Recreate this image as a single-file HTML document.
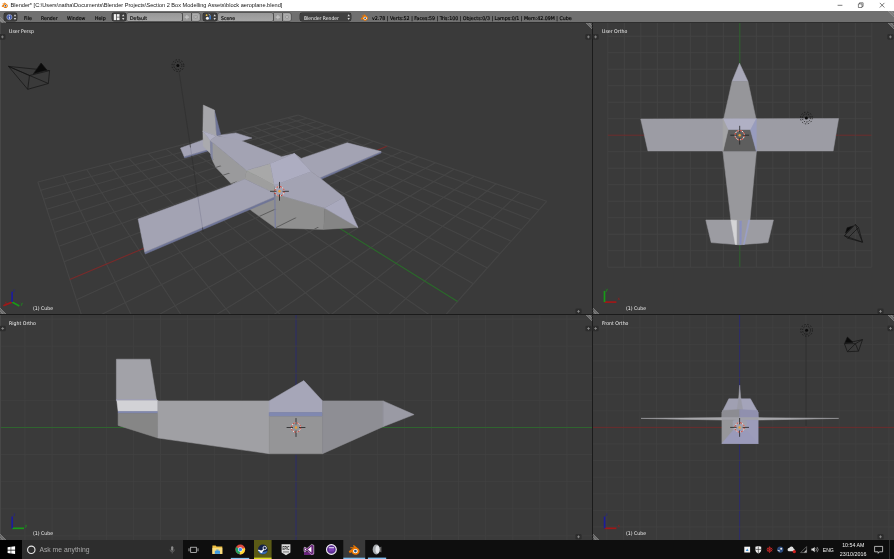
<!DOCTYPE html>
<html><head><meta charset="utf-8"><title>Blender</title>
<style>
html,body{margin:0;padding:0;}
body{width:894px;height:559px;overflow:hidden;position:relative;background:#3a3a3a;font-family:"DejaVu Sans","Liberation Sans",sans-serif;}
.abs{position:absolute;white-space:nowrap;}
#all{position:absolute;left:0;top:0;width:894px;height:559px;will-change:transform;}
#title{left:0;top:0;width:894px;height:10.8px;background:#fff;}
#title .t{left:10.6px;top:1.6px;font:5.6px/7px "Liberation Sans",sans-serif;color:#151515;}
#hdr{left:0;top:10.8px;width:894px;height:11.6px;background:#707070;border-bottom:0.9px solid #2e2e2e;}
#lstrip{left:0;top:23.3px;width:1px;height:517px;background:#474747;}
.m{font-size:5px;line-height:7px;color:#050505;top:14.6px;-webkit-text-stroke:0.15px #050505;transform:translateY(-0.4px) scaleX(.93);transform-origin:0 50%;}
.vl{font-size:5px;line-height:7px;color:#f2f2f2;transform:scaleX(.93);transform-origin:0 50%;}
.fld{background:linear-gradient(#989898,#a6a6a6);border-radius:1.6px;height:8.6px;top:12.8px;box-shadow:0 0 0 0.4px #3e3e3e;}
.btn{background:#999;}
.dk{background:#3d3d3d;border-radius:2px;height:8.8px;top:12.7px;box-shadow:0 0 0 0.4px #2a2a2a;}
#hsplit{left:0;top:314px;width:894px;height:1px;background:#1b1b1b;}
#vsplit{left:592px;top:23px;width:1px;height:517px;background:#1b1b1b;}
#task{left:0;top:540px;width:894px;height:19px;background:#0e0e0e;}
.s{font:5.6px/7px "Liberation Sans",sans-serif;color:#f0f0f0;}
</style></head><body><div id="all">
<div id="title" class="abs"><span class="abs t">Blender* [C:\Users\natha\Documents\Blender Projects\Section 2 Box Modelling Assets\block aeroplane.blend]</span></div>
<div id="hdr" class="abs"></div>
<div class="abs dk" style="left:4.1px;width:13.3px"></div>
<span class="abs m" style="left:23.5px">File</span>
<span class="abs m" style="left:41px">Render</span>
<span class="abs m" style="left:66.7px">Window</span>
<span class="abs m" style="left:94.8px">Help</span>
<div class="abs dk" style="left:112px;width:13.8px"></div>
<div class="abs fld" style="left:126.5px;width:55.7px"></div>
<span class="abs m" style="left:129.8px">Default</span>
<div class="abs fld btn" style="left:182.9px;width:8px;border-radius:0"></div>
<div class="abs fld btn" style="left:191.6px;width:8px;border-radius:0 1.6px 1.6px 0"></div>
<div class="abs dk" style="left:203.4px;width:14px"></div>
<div class="abs fld" style="left:218.1px;width:55.1px"></div>
<span class="abs m" style="left:220.8px">Scene</span>
<div class="abs fld btn" style="left:273.8px;width:8.1px;border-radius:0"></div>
<div class="abs fld btn" style="left:282.6px;width:8.7px;border-radius:0 1.6px 1.6px 0"></div>
<div class="abs dk" style="left:300.4px;width:50.7px;background:#404040"></div>
<span class="abs m" style="left:303.7px;color:#f0f0f0;-webkit-text-stroke:0;transform:translateY(-0.4px) scaleX(.9)">Blender Render</span>
<span class="abs m" style="left:372.2px;transform:translateY(-0.4px) scaleX(.947)">v2.78 | Verts:52 | Faces:59 | Tris:100 | Objects:0/3 | Lamps:0/1 | Mem:42.09M | Cube</span>
<svg style="position:absolute;left:0;top:23px" width="592" height="291" viewBox="0 23 592 291"><line x1="179.6" y1="614.1" x2="37.9" y2="182.0" stroke="#454545" stroke-width="1.1" /><line x1="179.6" y1="614.1" x2="546.6" y2="201.3" stroke="#454545" stroke-width="1.1" /><line x1="242.8" y1="543.1" x2="63.2" y2="175.5" stroke="#454545" stroke-width="1.1" /><line x1="153.2" y1="533.6" x2="520.2" y2="192.2" stroke="#454545" stroke-width="1.1" /><line x1="292.8" y1="486.9" x2="86.7" y2="169.5" stroke="#454545" stroke-width="1.1" /><line x1="132.9" y1="471.8" x2="496.2" y2="183.8" stroke="#454545" stroke-width="1.1" /><line x1="333.3" y1="441.3" x2="108.6" y2="163.8" stroke="#454545" stroke-width="1.1" /><line x1="116.9" y1="423.0" x2="474.2" y2="176.2" stroke="#454545" stroke-width="1.1" /><line x1="366.7" y1="403.7" x2="129.0" y2="158.6" stroke="#454545" stroke-width="1.1" /><line x1="103.9" y1="383.4" x2="454.0" y2="169.2" stroke="#454545" stroke-width="1.1" /><line x1="394.9" y1="372.0" x2="148.1" y2="153.7" stroke="#454545" stroke-width="1.1" /><line x1="93.2" y1="350.7" x2="435.4" y2="162.8" stroke="#454545" stroke-width="1.1" /><line x1="418.9" y1="345.0" x2="166.0" y2="149.1" stroke="#454545" stroke-width="1.1" /><line x1="84.2" y1="323.1" x2="418.2" y2="156.8" stroke="#454545" stroke-width="1.1" /><line x1="439.5" y1="321.8" x2="182.8" y2="144.8" stroke="#454545" stroke-width="1.1" /><line x1="76.5" y1="299.7" x2="402.2" y2="151.3" stroke="#454545" stroke-width="1.1" /><line x1="457.6" y1="301.5" x2="198.6" y2="140.7" stroke="#2a6a2a" stroke-width="1.1" /><line x1="69.8" y1="279.4" x2="387.4" y2="146.1" stroke="#7a2a2a" stroke-width="1.1" /><line x1="473.4" y1="283.7" x2="213.5" y2="136.9" stroke="#454545" stroke-width="1.1" /><line x1="64.0" y1="261.8" x2="373.6" y2="141.3" stroke="#454545" stroke-width="1.1" /><line x1="487.4" y1="267.9" x2="227.6" y2="133.2" stroke="#454545" stroke-width="1.1" /><line x1="58.9" y1="246.2" x2="360.7" y2="136.8" stroke="#454545" stroke-width="1.1" /><line x1="500.0" y1="253.8" x2="240.9" y2="129.8" stroke="#454545" stroke-width="1.1" /><line x1="54.4" y1="232.5" x2="348.6" y2="132.6" stroke="#454545" stroke-width="1.1" /><line x1="511.2" y1="241.2" x2="253.6" y2="126.6" stroke="#454545" stroke-width="1.1" /><line x1="50.4" y1="220.2" x2="337.2" y2="128.7" stroke="#454545" stroke-width="1.1" /><line x1="521.4" y1="229.7" x2="265.5" y2="123.5" stroke="#454545" stroke-width="1.1" /><line x1="46.8" y1="209.2" x2="326.5" y2="125.0" stroke="#454545" stroke-width="1.1" /><line x1="530.6" y1="219.4" x2="276.9" y2="120.5" stroke="#454545" stroke-width="1.1" /><line x1="43.5" y1="199.3" x2="316.5" y2="121.5" stroke="#454545" stroke-width="1.1" /><line x1="539.0" y1="210.0" x2="287.7" y2="117.8" stroke="#454545" stroke-width="1.1" /><line x1="40.6" y1="190.3" x2="307.0" y2="118.2" stroke="#454545" stroke-width="1.1" /><line x1="546.6" y1="201.3" x2="298.0" y2="115.1" stroke="#454545" stroke-width="1.1" /><line x1="37.9" y1="182.0" x2="298.0" y2="115.1" stroke="#454545" stroke-width="1.1" /><polygon points="218.0,135.5 235.8,132.9 251.9,138.0 238.0,142.0" fill="#a3a3b5" stroke="#a3a3b5" stroke-width="0.5" stroke-linejoin="round" /><polygon points="214.3,110.0 220.7,134.6 216.3,135.9" fill="#6f7597" stroke="#6f7597" stroke-width="0.5" stroke-linejoin="round" /><polygon points="203.3,105.1 214.3,110.0 216.3,135.9 202.9,131.2" fill="#a6a6aa" stroke="#a6a6aa" stroke-width="0.5" stroke-linejoin="round" /><polygon points="184.1,156.5 210.3,148.7 210.5,150.2 184.5,158.0" fill="#6f7597" stroke="#6f7597" stroke-width="0.5" stroke-linejoin="round" /><polygon points="180.5,148.0 202.9,140.0 210.3,148.7 184.1,156.5" fill="#a3a3b5" stroke="#a3a3b5" stroke-width="0.5" stroke-linejoin="round" /><polygon points="202.9,131.2 210.3,140.6 210.8,154.0 203.2,146.0" fill="#aaaaae" stroke="#aaaaae" stroke-width="0.5" stroke-linejoin="round" /><polygon points="202.9,131.2 216.3,135.9 210.3,140.6" fill="#b0b0c2" stroke="#b0b0c2" stroke-width="0.5" stroke-linejoin="round" /><polygon points="210.2,140.4 246.6,170.4 244.8,179.1 232.0,184.5 216.0,167.5 212.7,161.0" fill="#9a9a9c" stroke="#9a9a9c" stroke-width="0.5" stroke-linejoin="round" /><polygon points="210.3,140.6 212.3,142.5 212.5,160.0 210.8,156.0" fill="#8286a2" stroke="#8286a2" stroke-width="0.5" stroke-linejoin="round" /><polygon points="246.6,170.4 274.4,185.3 273.9,193.0 244.8,179.1" fill="#9e9e9e" stroke="#9e9e9e" stroke-width="0.5" stroke-linejoin="round" /><polygon points="246.6,170.4 270.3,163.4 274.4,185.3" fill="#a8a8a8" stroke="#a8a8a8" stroke-width="0.5" stroke-linejoin="round" /><polygon points="210.2,140.4 216.3,135.7 238.0,139.5 281.5,156.7 294.5,153.6 270.3,163.4 246.6,170.4" fill="#a3a3b3" stroke="#a3a3b3" stroke-width="0.5" stroke-linejoin="round" /><polygon points="249.0,208.5 274.0,199.0 275.5,193.9 324.5,208.0 323.8,229.4 275.5,228.0 251.3,210.6" fill="#8f8f8f" stroke="#8f8f8f" stroke-width="0.5" stroke-linejoin="round" /><polygon points="324.5,208.0 358.0,227.4 323.8,229.4" fill="#858585" stroke="#858585" stroke-width="0.5" stroke-linejoin="round" /><clipPath id="fc"><polygon points="248.4,190.0 275.8,208.9 323.8,229.4 275.5,228.0 251.3,210.6 249.0,208.5"/><polygon points="213.0,159.0 238.0,180.5 232.0,184.5 216.0,167.5"/></clipPath><g clip-path="url(#fc)"><line x1="179.6" y1="614.1" x2="546.6" y2="201.3" stroke="#484848" stroke-width="0.7" /><line x1="153.2" y1="533.6" x2="520.2" y2="192.2" stroke="#484848" stroke-width="0.7" /><line x1="132.9" y1="471.8" x2="496.2" y2="183.8" stroke="#484848" stroke-width="0.7" /><line x1="116.9" y1="423.0" x2="474.2" y2="176.2" stroke="#484848" stroke-width="0.7" /><line x1="103.9" y1="383.4" x2="454.0" y2="169.2" stroke="#484848" stroke-width="0.7" /><line x1="93.2" y1="350.7" x2="435.4" y2="162.8" stroke="#484848" stroke-width="0.7" /><line x1="84.2" y1="323.1" x2="418.2" y2="156.8" stroke="#484848" stroke-width="0.7" /><line x1="76.5" y1="299.7" x2="402.2" y2="151.3" stroke="#484848" stroke-width="0.7" /><line x1="69.8" y1="279.4" x2="387.4" y2="146.1" stroke="#484848" stroke-width="0.7" /><line x1="64.0" y1="261.8" x2="373.6" y2="141.3" stroke="#484848" stroke-width="0.7" /><line x1="58.9" y1="246.2" x2="360.7" y2="136.8" stroke="#484848" stroke-width="0.7" /><line x1="54.4" y1="232.5" x2="348.6" y2="132.6" stroke="#484848" stroke-width="0.7" /><line x1="50.4" y1="220.2" x2="337.2" y2="128.7" stroke="#484848" stroke-width="0.7" /><line x1="46.8" y1="209.2" x2="326.5" y2="125.0" stroke="#484848" stroke-width="0.7" /><line x1="43.5" y1="199.3" x2="316.5" y2="121.5" stroke="#484848" stroke-width="0.7" /><line x1="40.6" y1="190.3" x2="307.0" y2="118.2" stroke="#484848" stroke-width="0.7" /><line x1="37.9" y1="182.0" x2="298.0" y2="115.1" stroke="#484848" stroke-width="0.7" /></g><polygon points="319.7,177.7 381.1,151.5 381.1,153.0 320.5,179.6" fill="#6f7597" stroke="#6f7597" stroke-width="0.5" stroke-linejoin="round" /><polygon points="294.5,153.6 301.2,158.5 347.2,142.8 381.1,151.5 319.7,177.7 311.1,171.5" fill="#a3a3b3" stroke="#a3a3b3" stroke-width="0.5" stroke-linejoin="round" /><polygon points="274.4,185.3 311.1,171.5 319.7,177.7 344.0,197.2 324.5,208.0 275.5,193.9" fill="#a3a3b3" stroke="#a3a3b3" stroke-width="0.5" stroke-linejoin="round" /><polygon points="344.0,197.2 358.0,227.4 324.5,208.0" fill="#a9a9bd" stroke="#a9a9bd" stroke-width="0.5" stroke-linejoin="round" /><polygon points="270.3,163.4 294.5,153.6 311.1,171.5 274.4,185.3" fill="#adadc1" stroke="#adadc1" stroke-width="0.5" stroke-linejoin="round" /><polygon points="144.7,252.0 274.0,197.0 274.0,199.3 145.2,254.0" fill="#6f7597" stroke="#6f7597" stroke-width="0.5" stroke-linejoin="round" /><polygon points="138.1,219.0 232.0,184.5 244.8,179.1 273.9,193.0 274.0,197.0 144.7,252.0" fill="#a3a3b3" stroke="#a3a3b3" stroke-width="0.5" stroke-linejoin="round" /><line x1="274.8" y1="194.0" x2="275.3" y2="228.0" stroke="#7a7f9f" stroke-width="1.3" /></svg>\n<svg style="position:absolute;left:593px;top:23px" width="301" height="291" viewBox="593 23 301 291"><line x1="607.8" y1="23.0" x2="607.8" y2="267.2" stroke="#454545" stroke-width="0.8" /><line x1="624.3" y1="23.0" x2="624.3" y2="267.2" stroke="#454545" stroke-width="0.8" /><line x1="640.8" y1="23.0" x2="640.8" y2="267.2" stroke="#454545" stroke-width="0.8" /><line x1="607.8" y1="36.2" x2="871.8" y2="36.2" stroke="#454545" stroke-width="0.8" /><line x1="657.3" y1="23.0" x2="657.3" y2="267.2" stroke="#454545" stroke-width="0.8" /><line x1="607.8" y1="52.7" x2="871.8" y2="52.7" stroke="#454545" stroke-width="0.8" /><line x1="673.8" y1="23.0" x2="673.8" y2="267.2" stroke="#454545" stroke-width="0.8" /><line x1="607.8" y1="69.2" x2="871.8" y2="69.2" stroke="#454545" stroke-width="0.8" /><line x1="690.3" y1="23.0" x2="690.3" y2="267.2" stroke="#454545" stroke-width="0.8" /><line x1="607.8" y1="85.7" x2="871.8" y2="85.7" stroke="#454545" stroke-width="0.8" /><line x1="706.8" y1="23.0" x2="706.8" y2="267.2" stroke="#454545" stroke-width="0.8" /><line x1="607.8" y1="102.2" x2="871.8" y2="102.2" stroke="#454545" stroke-width="0.8" /><line x1="723.3" y1="23.0" x2="723.3" y2="267.2" stroke="#454545" stroke-width="0.8" /><line x1="607.8" y1="118.7" x2="871.8" y2="118.7" stroke="#454545" stroke-width="0.8" /><line x1="739.8" y1="23.0" x2="739.8" y2="267.2" stroke="#2c6e2c" stroke-width="0.8" /><line x1="607.8" y1="135.2" x2="871.8" y2="135.2" stroke="#7a2a2a" stroke-width="0.8" /><line x1="756.3" y1="23.0" x2="756.3" y2="267.2" stroke="#454545" stroke-width="0.8" /><line x1="607.8" y1="151.7" x2="871.8" y2="151.7" stroke="#454545" stroke-width="0.8" /><line x1="772.8" y1="23.0" x2="772.8" y2="267.2" stroke="#454545" stroke-width="0.8" /><line x1="607.8" y1="168.2" x2="871.8" y2="168.2" stroke="#454545" stroke-width="0.8" /><line x1="789.3" y1="23.0" x2="789.3" y2="267.2" stroke="#454545" stroke-width="0.8" /><line x1="607.8" y1="184.7" x2="871.8" y2="184.7" stroke="#454545" stroke-width="0.8" /><line x1="805.8" y1="23.0" x2="805.8" y2="267.2" stroke="#454545" stroke-width="0.8" /><line x1="607.8" y1="201.2" x2="871.8" y2="201.2" stroke="#454545" stroke-width="0.8" /><line x1="822.3" y1="23.0" x2="822.3" y2="267.2" stroke="#454545" stroke-width="0.8" /><line x1="607.8" y1="217.7" x2="871.8" y2="217.7" stroke="#454545" stroke-width="0.8" /><line x1="838.8" y1="23.0" x2="838.8" y2="267.2" stroke="#454545" stroke-width="0.8" /><line x1="607.8" y1="234.2" x2="871.8" y2="234.2" stroke="#454545" stroke-width="0.8" /><line x1="855.3" y1="23.0" x2="855.3" y2="267.2" stroke="#454545" stroke-width="0.8" /><line x1="607.8" y1="250.7" x2="871.8" y2="250.7" stroke="#454545" stroke-width="0.8" /><line x1="871.8" y1="23.0" x2="871.8" y2="267.2" stroke="#454545" stroke-width="0.8" /><line x1="607.8" y1="267.2" x2="871.8" y2="267.2" stroke="#454545" stroke-width="0.8" /><polygon points="739.5,63.2 748.0,81.5 732.0,81.5" fill="#a8a8b8" stroke="#a8a8b8" stroke-width="0.5" stroke-linejoin="round" /><polygon points="732.0,81.5 748.0,81.5 756.0,118.7 723.7,118.7" fill="#96969a" stroke="#96969a" stroke-width="0.5" stroke-linejoin="round" /><polygon points="640.7,119.0 838.6,118.5 833.2,150.9 647.9,150.9" fill="#9c9ca4" stroke="#9c9ca4" stroke-width="0.5" stroke-linejoin="round" /><polygon points="722.9,118.8 756.4,118.8 750.5,130.1 728.1,130.1" fill="#b0b0c4" stroke="#b0b0c4" stroke-width="0.5" stroke-linejoin="round" /><polygon points="728.1,130.1 750.5,130.1 756.4,151.6 722.9,151.6" fill="#5e5e5e" stroke="#5e5e5e" stroke-width="0.5" stroke-linejoin="round" /><polygon points="722.9,118.8 728.1,130.1 722.9,151.6" fill="#a4a4a6" stroke="#a4a4a6" stroke-width="0.5" stroke-linejoin="round" /><polygon points="756.4,118.8 750.5,130.1 756.4,151.6" fill="#989cbe" stroke="#989cbe" stroke-width="0.5" stroke-linejoin="round" /><polygon points="722.9,151.6 756.4,151.6 749.9,220.3 730.9,220.3" fill="#98989c" stroke="#98989c" stroke-width="0.5" stroke-linejoin="round" /><polygon points="705.8,220.0 773.4,220.0 768.0,242.6 739.4,244.8 711.2,242.6" fill="#9c9ca2" stroke="#9c9ca2" stroke-width="0.5" stroke-linejoin="round" /><polygon points="730.9,220.0 737.1,220.5 737.1,244.4 735.3,244.4" fill="#d4d4d6" stroke="#d4d4d6" stroke-width="0.5" stroke-linejoin="round" /><polygon points="737.1,220.5 748.6,220.3 743.8,244.4 737.1,244.4" fill="#9a9aa2" stroke="#9a9aa2" stroke-width="0.5" stroke-linejoin="round" /><polygon points="739.8,221.0 741.6,221.0 741.2,244.4 739.8,244.4" fill="#8a90c0" stroke="#8a90c0" stroke-width="0.5" stroke-linejoin="round" /><polygon points="748.5,220.0 749.9,220.0 744.4,244.4 743.4,244.4" fill="#9aa0c8" stroke="#9aa0c8" stroke-width="0.5" stroke-linejoin="round" /></svg>\n<svg style="position:absolute;left:0;top:315px" width="592" height="225" viewBox="0 315 592 225"><line x1="-2.1" y1="315.0" x2="-2.1" y2="540.0" stroke="#414141" stroke-width="0.8" /><line x1="25.0" y1="315.0" x2="25.0" y2="540.0" stroke="#414141" stroke-width="0.8" /><line x1="52.1" y1="315.0" x2="52.1" y2="540.0" stroke="#414141" stroke-width="0.8" /><line x1="79.2" y1="315.0" x2="79.2" y2="540.0" stroke="#414141" stroke-width="0.8" /><line x1="106.3" y1="315.0" x2="106.3" y2="540.0" stroke="#414141" stroke-width="0.8" /><line x1="133.4" y1="315.0" x2="133.4" y2="540.0" stroke="#414141" stroke-width="0.8" /><line x1="160.5" y1="315.0" x2="160.5" y2="540.0" stroke="#414141" stroke-width="0.8" /><line x1="187.6" y1="315.0" x2="187.6" y2="540.0" stroke="#414141" stroke-width="0.8" /><line x1="214.7" y1="315.0" x2="214.7" y2="540.0" stroke="#414141" stroke-width="0.8" /><line x1="241.8" y1="315.0" x2="241.8" y2="540.0" stroke="#414141" stroke-width="0.8" /><line x1="268.9" y1="315.0" x2="268.9" y2="540.0" stroke="#414141" stroke-width="0.8" /><line x1="296.0" y1="315.0" x2="296.0" y2="540.0" stroke="#2a2a78" stroke-width="0.8" /><line x1="323.1" y1="315.0" x2="323.1" y2="540.0" stroke="#414141" stroke-width="0.8" /><line x1="350.2" y1="315.0" x2="350.2" y2="540.0" stroke="#414141" stroke-width="0.8" /><line x1="377.3" y1="315.0" x2="377.3" y2="540.0" stroke="#414141" stroke-width="0.8" /><line x1="404.4" y1="315.0" x2="404.4" y2="540.0" stroke="#414141" stroke-width="0.8" /><line x1="431.5" y1="315.0" x2="431.5" y2="540.0" stroke="#414141" stroke-width="0.8" /><line x1="458.6" y1="315.0" x2="458.6" y2="540.0" stroke="#414141" stroke-width="0.8" /><line x1="485.7" y1="315.0" x2="485.7" y2="540.0" stroke="#414141" stroke-width="0.8" /><line x1="512.8" y1="315.0" x2="512.8" y2="540.0" stroke="#414141" stroke-width="0.8" /><line x1="539.9" y1="315.0" x2="539.9" y2="540.0" stroke="#414141" stroke-width="0.8" /><line x1="567.0" y1="315.0" x2="567.0" y2="540.0" stroke="#414141" stroke-width="0.8" /><line x1="594.1" y1="315.0" x2="594.1" y2="540.0" stroke="#414141" stroke-width="0.8" /><line x1="0.0" y1="319.1" x2="592.0" y2="319.1" stroke="#414141" stroke-width="0.8" /><line x1="0.0" y1="346.2" x2="592.0" y2="346.2" stroke="#414141" stroke-width="0.8" /><line x1="0.0" y1="373.3" x2="592.0" y2="373.3" stroke="#414141" stroke-width="0.8" /><line x1="0.0" y1="400.4" x2="592.0" y2="400.4" stroke="#414141" stroke-width="0.8" /><line x1="0.0" y1="427.5" x2="592.0" y2="427.5" stroke="#2c6e2c" stroke-width="0.8" /><line x1="0.0" y1="454.6" x2="592.0" y2="454.6" stroke="#414141" stroke-width="0.8" /><line x1="0.0" y1="481.7" x2="592.0" y2="481.7" stroke="#414141" stroke-width="0.8" /><line x1="0.0" y1="508.8" x2="592.0" y2="508.8" stroke="#414141" stroke-width="0.8" /><line x1="0.0" y1="535.9" x2="592.0" y2="535.9" stroke="#414141" stroke-width="0.8" /><polygon points="116.4,359.2 150.0,359.2 156.5,400.0 116.4,400.0" fill="#a2a2a8" stroke="#a2a2a8" stroke-width="0.5" stroke-linejoin="round" /><polygon points="116.4,399.6 156.5,399.6 156.6,400.6 116.4,400.6" fill="#9c9cb6" stroke="#9c9cb6" stroke-width="0.5" stroke-linejoin="round" /><polygon points="116.8,400.4 157.9,400.4 157.9,411.5 118.1,411.5" fill="#d2d2d6" stroke="#d2d2d6" stroke-width="0.5" stroke-linejoin="round" /><polygon points="118.1,411.5 157.9,411.5 157.9,413.5 118.1,413.5" fill="#8088b0" stroke="#8088b0" stroke-width="0.5" stroke-linejoin="round" /><polygon points="118.1,413.3 157.9,413.3 157.9,438.0 118.1,425.4" fill="#868686" stroke="#868686" stroke-width="0.5" stroke-linejoin="round" /><polygon points="157.9,400.9 269.1,400.9 269.1,453.7 157.9,438.0" fill="#a0a0a4" stroke="#a0a0a4" stroke-width="0.5" stroke-linejoin="round" /><polygon points="269.1,400.9 303.8,380.6 322.6,400.9 322.6,412.5 269.1,412.5" fill="#a6a6b8" stroke="#a6a6b8" stroke-width="0.5" stroke-linejoin="round" /><polygon points="269.1,412.5 322.6,412.5 322.6,416.5 269.1,416.5" fill="#8088b0" stroke="#8088b0" stroke-width="0.5" stroke-linejoin="round" /><polygon points="269.1,416.5 322.6,416.5 322.6,453.7 269.1,453.7" fill="#959597" stroke="#959597" stroke-width="0.5" stroke-linejoin="round" /><polygon points="322.6,400.9 383.1,400.9 383.1,426.7 322.6,453.7" fill="#8e8e94" stroke="#8e8e94" stroke-width="0.5" stroke-linejoin="round" /><polygon points="383.1,400.9 414.1,414.6 383.1,426.7" fill="#9a9aa4" stroke="#9a9aa4" stroke-width="0.5" stroke-linejoin="round" /></svg>\n<svg style="position:absolute;left:593px;top:315px" width="301" height="225" viewBox="593 315 301 225"><line x1="590.2" y1="315.0" x2="590.2" y2="540.0" stroke="#414141" stroke-width="0.8" /><line x1="606.8" y1="315.0" x2="606.8" y2="540.0" stroke="#414141" stroke-width="0.8" /><line x1="623.4" y1="315.0" x2="623.4" y2="540.0" stroke="#414141" stroke-width="0.8" /><line x1="640.0" y1="315.0" x2="640.0" y2="540.0" stroke="#414141" stroke-width="0.8" /><line x1="656.6" y1="315.0" x2="656.6" y2="540.0" stroke="#414141" stroke-width="0.8" /><line x1="673.2" y1="315.0" x2="673.2" y2="540.0" stroke="#414141" stroke-width="0.8" /><line x1="689.8" y1="315.0" x2="689.8" y2="540.0" stroke="#414141" stroke-width="0.8" /><line x1="706.4" y1="315.0" x2="706.4" y2="540.0" stroke="#414141" stroke-width="0.8" /><line x1="723.0" y1="315.0" x2="723.0" y2="540.0" stroke="#414141" stroke-width="0.8" /><line x1="739.6" y1="315.0" x2="739.6" y2="540.0" stroke="#2a2a78" stroke-width="0.8" /><line x1="756.2" y1="315.0" x2="756.2" y2="540.0" stroke="#414141" stroke-width="0.8" /><line x1="772.8" y1="315.0" x2="772.8" y2="540.0" stroke="#414141" stroke-width="0.8" /><line x1="789.4" y1="315.0" x2="789.4" y2="540.0" stroke="#414141" stroke-width="0.8" /><line x1="806.0" y1="315.0" x2="806.0" y2="540.0" stroke="#414141" stroke-width="0.8" /><line x1="822.6" y1="315.0" x2="822.6" y2="540.0" stroke="#414141" stroke-width="0.8" /><line x1="839.2" y1="315.0" x2="839.2" y2="540.0" stroke="#414141" stroke-width="0.8" /><line x1="855.8" y1="315.0" x2="855.8" y2="540.0" stroke="#414141" stroke-width="0.8" /><line x1="872.4" y1="315.0" x2="872.4" y2="540.0" stroke="#414141" stroke-width="0.8" /><line x1="889.0" y1="315.0" x2="889.0" y2="540.0" stroke="#414141" stroke-width="0.8" /><line x1="593.0" y1="327.8" x2="894.0" y2="327.8" stroke="#414141" stroke-width="0.8" /><line x1="593.0" y1="344.4" x2="894.0" y2="344.4" stroke="#414141" stroke-width="0.8" /><line x1="593.0" y1="361.0" x2="894.0" y2="361.0" stroke="#414141" stroke-width="0.8" /><line x1="593.0" y1="377.6" x2="894.0" y2="377.6" stroke="#414141" stroke-width="0.8" /><line x1="593.0" y1="394.2" x2="894.0" y2="394.2" stroke="#414141" stroke-width="0.8" /><line x1="593.0" y1="410.8" x2="894.0" y2="410.8" stroke="#414141" stroke-width="0.8" /><line x1="593.0" y1="427.4" x2="894.0" y2="427.4" stroke="#7a2a2a" stroke-width="0.8" /><line x1="593.0" y1="444.0" x2="894.0" y2="444.0" stroke="#414141" stroke-width="0.8" /><line x1="593.0" y1="460.6" x2="894.0" y2="460.6" stroke="#414141" stroke-width="0.8" /><line x1="593.0" y1="477.2" x2="894.0" y2="477.2" stroke="#414141" stroke-width="0.8" /><line x1="593.0" y1="493.8" x2="894.0" y2="493.8" stroke="#414141" stroke-width="0.8" /><line x1="593.0" y1="510.4" x2="894.0" y2="510.4" stroke="#414141" stroke-width="0.8" /><line x1="593.0" y1="527.0" x2="894.0" y2="527.0" stroke="#414141" stroke-width="0.8" /><line x1="806.0" y1="330.0" x2="806.0" y2="426.0" stroke="#2a2a2a" stroke-width="0.7" /><polygon points="739.7,385.2 740.6,397.0 742.8,410.0 737.0,410.0 738.8,397.0" fill="#a0a0a8" stroke="#a0a0a8" stroke-width="0.5" stroke-linejoin="round" /><polygon points="728.8,398.8 739.7,398.8 739.7,412.5 721.9,412.5" fill="#a0a0b2" stroke="#a0a0b2" stroke-width="0.5" stroke-linejoin="round" /><polygon points="739.7,398.8 750.4,398.8 758.2,412.5 739.7,412.5" fill="#a4a4ba" stroke="#a4a4ba" stroke-width="0.5" stroke-linejoin="round" /><polygon points="738.6,398.8 740.8,398.8 742.8,410.0 737.0,410.0" fill="#9a9aa6" stroke="#9a9aa6" stroke-width="0.5" stroke-linejoin="round" /><polygon points="721.9,412.5 739.7,412.5 739.7,443.5 721.9,443.5" fill="#96969a" stroke="#96969a" stroke-width="0.5" stroke-linejoin="round" /><polygon points="739.7,412.5 758.2,412.5 758.2,443.5 739.7,443.5" fill="#9c9cba" stroke="#9c9cba" stroke-width="0.5" stroke-linejoin="round" /><polygon points="722.5,410.5 739.7,409.5 739.7,417.5 721.9,417.5" fill="#8c8c92" stroke="#8c8c92" stroke-width="0.5" stroke-linejoin="round" /><polygon points="739.7,409.5 757.4,410.5 758.2,417.5 739.7,417.5" fill="#9090ae" stroke="#9090ae" stroke-width="0.5" stroke-linejoin="round" /><polygon points="733.0,430.5 746.5,430.5 746.5,421.0 739.7,418.0 733.0,421.0" fill="#a0a0ae" stroke="#a0a0ae" stroke-width="0.5" stroke-linejoin="round" /><polygon points="721.9,443.5 733.0,430.5 746.5,430.5 758.2,443.5" fill="#9a9aba" stroke="#9a9aba" stroke-width="0.5" stroke-linejoin="round" /><polygon points="641.0,418.4 722.0,417.6 722.0,420.0 690.0,419.4" fill="#a6a6aa" stroke="#a6a6aa" stroke-width="0.5" stroke-linejoin="round" /><polygon points="838.7,418.4 758.0,417.6 758.0,420.0 790.0,419.4" fill="#a6a6aa" stroke="#a6a6aa" stroke-width="0.5" stroke-linejoin="round" /><polygon points="722.0,417.6 758.0,417.6 758.0,419.6 722.0,419.6" fill="#a2a2a8" stroke="#a2a2a8" stroke-width="0.5" stroke-linejoin="round" /></svg>
<div id="lstrip" class="abs"></div><div id="hsplit" class="abs"></div><div id="vsplit" class="abs"></div>
<span class="abs vl" style="left:9.2px;top:27.8px">User Persp</span>
<span class="abs vl" style="left:602px;top:27.8px">User Ortho</span>
<span class="abs vl" style="left:9.2px;top:319.5px">Right Ortho</span>
<span class="abs vl" style="left:602px;top:319.5px">Front Ortho</span>
<span class="abs vl" style="left:32.6px;top:305px">(1) Cube</span>
<span class="abs vl" style="left:625.6px;top:305px">(1) Cube</span>
<span class="abs vl" style="left:32.6px;top:530.4px">(1) Cube</span>
<span class="abs vl" style="left:625.6px;top:530.4px">(1) Cube</span>
<div id="task" class="abs"></div>
<svg class="abs" style="left:0;top:0" width="894" height="559" viewBox="0 0 894 559"><g transform="translate(4.60,5.40) scale(0.500)"><path d="M-6 1.2 L-1.2 -2.4 L-4.2 -2.4 L-4.2 -3.6 L0.6 -3.6 L-1.2 -5 L-0.2 -5.9 L5.2 -1.9 A4.6 4.2 0 1 1 -2.6 2.2 L-4.8 3.4 Z" fill="#ea7600"/><ellipse cx="1.6" cy="0.9" rx="2.7" ry="2.5" fill="#fff"/><circle cx="1.6" cy="0.9" r="1.55" fill="#265787"/></g><path d="M837.6 5.3h4.8" stroke="#222" stroke-width="0.6"/><path d="M858.4 3.9h3.6v3.6h-3.6zM859.5 3.9v-1.1h3.6v3.6h-1.1" stroke="#222" stroke-width="0.55" fill="none"/><path d="M879.8 2.9l4.6 4.6M884.4 2.9l-4.6 4.6" stroke="#222" stroke-width="0.6"/><circle cx="9.4" cy="17.1" r="2.6" fill="#3e56a8" stroke="#c8d0ee" stroke-width="0.5"/><path d="M9.4 16.6v2.2M9.4 15.2v0.7" stroke="#fff" stroke-width="0.8"/><path d="M13.8 16.2l1.2 -1.9l1.2 1.9zM13.8 18.0l1.2 1.9l1.2 -1.9z" fill="#d8d8d8"/><path d="M122.0 16.2l1.2 -1.9l1.2 1.9zM122.0 18.0l1.2 1.9l1.2 -1.9z" fill="#d8d8d8"/><path d="M213.5 16.2l1.2 -1.9l1.2 1.9zM213.5 18.0l1.2 1.9l1.2 -1.9z" fill="#d8d8d8"/><path d="M347.5 16.2l1.2 -1.9l1.2 1.9zM347.5 18.0l1.2 1.9l1.2 -1.9z" fill="#d8d8d8"/><rect x="113.8" y="14.1" width="2.4" height="6" fill="#f0f0f0"/><rect x="116.9" y="14.1" width="2.6" height="2.7" fill="#f0f0f0"/><rect x="116.9" y="17.4" width="2.6" height="2.7" fill="#f0f0f0"/><circle cx="207.4" cy="18.2" r="1.5" fill="#f0f0f0"/><rect x="209.3" y="15.6" width="1.6" height="3.8" fill="#3a7ad0"/><circle cx="206.6" cy="15.2" r="0.9" fill="#e8c040"/><path d="M208.6 14.2l1.8 1.1" stroke="#ddd" stroke-width="0.7"/><path d="M184.7 17.1h4.4M186.9 14.9v4.4" stroke="#c4c4c4" stroke-width="1.1"/><rect x="192.8" y="14.3" width="5.6" height="5.6" rx="1" fill="none" stroke="#c4c4c4" stroke-width="0.6"/><path d="M194.1 15.6l3 3M197.1 15.6l-3 3" stroke="#c4c4c4" stroke-width="0.7"/><path d="M275.7 17.1h4.4M277.9 14.9v4.4" stroke="#c4c4c4" stroke-width="1.1"/><rect x="284.2" y="14.3" width="5.6" height="5.6" rx="1" fill="none" stroke="#c4c4c4" stroke-width="0.6"/><path d="M285.5 15.6l3 3M288.5 15.6l-3 3" stroke="#c4c4c4" stroke-width="0.7"/><g transform="translate(364.20,17.70) scale(0.580)"><path d="M-6 1.2 L-1.2 -2.4 L-4.2 -2.4 L-4.2 -3.6 L0.6 -3.6 L-1.2 -5 L-0.2 -5.9 L5.2 -1.9 A4.6 4.2 0 1 1 -2.6 2.2 L-4.8 3.4 Z" fill="#ea7600"/><ellipse cx="1.6" cy="0.9" rx="2.7" ry="2.5" fill="#fff"/><circle cx="1.6" cy="0.9" r="1.55" fill="#265787"/></g><rect x="0" y="540" width="22" height="19" fill="#020202"/><rect x="22" y="540" width="161" height="19" fill="#2d2d2d"/><path d="M7.6 547.3l3.1 -0.45v3h-3.1zM11.2 546.8l3.9 -0.55v3.6h-3.9zM7.6 550.4h3.1v3l-3.1 -0.45zM11.2 550.4h3.9v3.6l-3.9 -0.55z" fill="#fff"/><circle cx="31.3" cy="549.8" r="3.7" fill="none" stroke="#e8e8e8" stroke-width="1.1"/><rect x="171.1" y="546.2" width="2.2" height="4.6" rx="1.1" fill="#8a8a8a"/><path d="M170 549.6a2.2 2.2 0 0 0 4.4 0M172.2 551.9v1.6" stroke="#8a8a8a" stroke-width="0.5" fill="none"/><rect x="190.7" y="547.2" width="5.6" height="5.2" fill="none" stroke="#e0e0e0" stroke-width="0.7"/><path d="M189 548.3v3M198 548.3v3" stroke="#e0e0e0" stroke-width="0.7"/><path d="M212.4 545.6h3.2l0.9 1h5.8v7.3h-9.9z" fill="#f0c040"/><rect x="212.4" y="547.8" width="9.9" height="6.1" fill="#f8dc80"/><path d="M214.8 553.9v-3.2h5.2v3.2z" fill="#3f9be0"/><rect x="216.2" y="549.6" width="2.4" height="1.1" fill="#3f9be0"/><g transform="translate(240.3,549.5)"><circle r="4.9" fill="#dd4b3e"/><path d="M0 0L-4.24 -2.45A4.9 4.9 0 0 0 -0.6 4.86z" fill="#1ea362"/><path d="M0 0L-0.6 4.86A4.9 4.9 0 0 0 4.7 -1.4z" fill="#fdd835"/><circle r="2.3" fill="#fff"/><circle r="1.8" fill="#4688f1"/></g><rect x="230.8" y="557.9" width="18.4" height="1.1" fill="#82bfee"/><rect x="254" y="540" width="17.6" height="17.5" fill="#5a5a16"/><rect x="254" y="557.5" width="17.6" height="1.5" fill="#dcdc20"/><g transform="translate(262.9,549.5)"><circle r="4.9" fill="#14224a"/><path d="M-4.9 0.2A4.9 4.9 0 0 0 4.6 1.6L0 2.5z" fill="#3a6ab0"/><circle cx="1.8" cy="-1.5" r="1.7" fill="none" stroke="#fff" stroke-width="0.8"/><path d="M-4.6 0.6l3.2 1.5l2.4-2.4" stroke="#fff" stroke-width="1.3" fill="none"/><circle cx="-1.6" cy="2.2" r="1.2" fill="#fff"/></g><path d="M281.6 544.2h8.8v8.2l-4.4 2.8l-4.4 -2.8z" fill="#dcdcdc"/><rect x="283" y="551.6" width="6" height="0.7" fill="#444"/><text x="286" y="550.4" font-size="5.8" font-weight="bold" text-anchor="middle" fill="#151515" font-family="Liberation Sans, sans-serif" textLength="7" lengthAdjust="spacingAndGlyphs">EPIC</text><rect x="304" y="551.8" width="9.8" height="3.2" fill="#68217a"/><path d="M311.6 544.4l-4.6 4.2l-2 -1.5l-1 0.5v3.8l1 0.5l2 -1.5l4.6 4.2l2.2 -0.9v-8.4z" fill="#68217a"/><path d="M311.4 546.6l-3.4 2.9l3.4 2.9zM305 548.3v2.4l1.3 -1.2z" fill="#fff"/><path d="M311.6 544.4l-4.6 4.2l-2 -1.5l-1 0.5v3.8l1 0.5l2 -1.5l4.6 4.2l2.2 -0.9v-8.4z" fill="none" stroke="#fff" stroke-width="0.5"/><circle cx="331.4" cy="549.5" r="4.9" fill="#5c2d91" stroke="#f4f4f4" stroke-width="1.1"/><rect x="328.8" y="547.6" width="5.2" height="3.8" rx="0.5" fill="#7a3fb4"/><rect x="328.8" y="547.2" width="5.2" height="1" fill="#e8e0f4"/><rect x="343.3" y="540" width="21.9" height="17.6" fill="#393939"/><rect x="343.3" y="557.6" width="21.9" height="1.4" fill="#82bfee"/><g transform="translate(354.00,550.30) scale(0.880)"><path d="M-6 1.2 L-1.2 -2.4 L-4.2 -2.4 L-4.2 -3.6 L0.6 -3.6 L-1.2 -5 L-0.2 -5.9 L5.2 -1.9 A4.6 4.2 0 1 1 -2.6 2.2 L-4.8 3.4 Z" fill="#ea7600"/><ellipse cx="1.6" cy="0.9" rx="2.7" ry="2.5" fill="#fff"/><circle cx="1.6" cy="0.9" r="1.55" fill="#265787"/></g><ellipse cx="376.3" cy="549.5" rx="3.6" ry="5" fill="#a8acb0"/><ellipse cx="377.5" cy="549.5" rx="2" ry="3.7" fill="#e4e6ea"/><path d="M380 547.2l1.4 -0.6v5.8l-1.4 -0.6z" fill="#666"/><rect x="367.9" y="557.6" width="18.3" height="1.4" fill="#82bfee"/><rect x="744.3" y="546.7" width="5.8" height="5.8" fill="#f4f4f4"/><path d="M745.8 551l1.4 -2.6l1.4 2.6z" fill="#3a90d8"/><path d="M755.4 546.8l2.9 -0.8l2.9 0.8v3.2c0 1.8 -1.6 2.9 -2.9 3.6c-1.3 -0.7 -2.9 -1.8 -2.9 -3.6z" fill="#f0f0f0"/><path d="M758.3 546.2v7.2M755.6 549.4h5.4" stroke="#222" stroke-width="0.6"/><path d="M766.8 549.6l2.8 -2.4l2.8 2.4l-2.8 2.6zM769.6 546.6v6M767 548l5.2 3.2M772.2 548l-5.2 3.2" stroke="#d02828" stroke-width="0.8" fill="none"/><circle cx="780.3" cy="549.6" r="3.1" fill="#2a4a7c"/><circle cx="781.2" cy="548.8" r="1" fill="#e8e8e8"/><path d="M777.6 550.3l2.4 0.8" stroke="#e8e8e8" stroke-width="0.9"/><path d="M788.6 551.2a1.6 1.6 0 0 1 0.6 -3.1a2.3 2.3 0 0 1 4.4 0.3a1.5 1.5 0 0 1 0.2 2.8z" fill="#e0e0e0"/><circle cx="794.3" cy="551.6" r="1.7" fill="#d02020"/><path d="M800.6 552.6l6 0v-6z" fill="none" stroke="#8a8a8a" stroke-width="0.6"/><path d="M803.6 552.6h3v-3z" fill="#bbb"/><path d="M811.4 548.6h1.4l1.9 -1.7v5.4l-1.9 -1.7h-1.4z" fill="#e0e0e0"/><path d="M815.8 548.1a2.2 2.2 0 0 1 0 3M817 547a3.8 3.8 0 0 1 0 5.2" stroke="#e0e0e0" stroke-width="0.55" fill="none"/><path d="M874.6 546.4h8v5.4h-3.2l-1.2 1.5v-1.5h-3.6z" fill="none" stroke="#f0f0f0" stroke-width="0.7"/><path d="M889.5 540v19" stroke="#555" stroke-width="0.5"/></svg>
<span class="abs s" style="left:39.4px;top:545.6px;font-size:6.8px;line-height:8px;color:#a8a8a8">Ask me anything</span>
<span class="abs s" style="left:822.8px;top:546.6px;font-size:5.1px">ENG</span>
<span class="abs s" style="left:842.2px;top:542.1px;font-size:5.25px">10:54 AM</span>
<span class="abs s" style="left:839.7px;top:550.5px;font-size:5.35px">23/10/2016</span>
<svg class="abs" style="left:0;top:0" width="894" height="559" viewBox="0 0 894 559"><g transform="translate(279.5,191.3)"><circle r="4.7" fill="none" stroke="#e4e4e4" stroke-width="1"/><circle r="4.7" fill="none" stroke="#cc2a1c" stroke-width="1" stroke-dasharray="1.85 1.84"/><line x1="3.0" y1="0.0" x2="9.4" y2="0.0" stroke="#1a1a1a" stroke-width="0.75" /><line x1="-3.0" y1="0.0" x2="-9.4" y2="0.0" stroke="#1a1a1a" stroke-width="0.75" /><line x1="0.0" y1="3.0" x2="0.0" y2="9.4" stroke="#1a1a1a" stroke-width="0.75" /><line x1="0.0" y1="-3.0" x2="0.0" y2="-9.4" stroke="#1a1a1a" stroke-width="0.75" /><circle r="1.2" fill="#f0a030"/></g><g transform="translate(739.7,135.2)"><circle r="4.7" fill="none" stroke="#e4e4e4" stroke-width="1"/><circle r="4.7" fill="none" stroke="#cc2a1c" stroke-width="1" stroke-dasharray="1.85 1.84"/><line x1="3.0" y1="0.0" x2="9.4" y2="0.0" stroke="#1a1a1a" stroke-width="0.75" /><line x1="-3.0" y1="0.0" x2="-9.4" y2="0.0" stroke="#1a1a1a" stroke-width="0.75" /><line x1="0.0" y1="3.0" x2="0.0" y2="9.4" stroke="#1a1a1a" stroke-width="0.75" /><line x1="0.0" y1="-3.0" x2="0.0" y2="-9.4" stroke="#1a1a1a" stroke-width="0.75" /><circle r="1.2" fill="#f0a030"/></g><g transform="translate(296.0,427.5)"><circle r="4.7" fill="none" stroke="#e4e4e4" stroke-width="1"/><circle r="4.7" fill="none" stroke="#cc2a1c" stroke-width="1" stroke-dasharray="1.85 1.84"/><line x1="3.0" y1="0.0" x2="9.4" y2="0.0" stroke="#1a1a1a" stroke-width="0.75" /><line x1="-3.0" y1="0.0" x2="-9.4" y2="0.0" stroke="#1a1a1a" stroke-width="0.75" /><line x1="0.0" y1="3.0" x2="0.0" y2="9.4" stroke="#1a1a1a" stroke-width="0.75" /><line x1="0.0" y1="-3.0" x2="0.0" y2="-9.4" stroke="#1a1a1a" stroke-width="0.75" /><circle r="1.2" fill="#f0a030"/></g><g transform="translate(739.6,427.4)"><circle r="4.7" fill="none" stroke="#e4e4e4" stroke-width="1"/><circle r="4.7" fill="none" stroke="#cc2a1c" stroke-width="1" stroke-dasharray="1.85 1.84"/><line x1="3.0" y1="0.0" x2="9.4" y2="0.0" stroke="#1a1a1a" stroke-width="0.75" /><line x1="-3.0" y1="0.0" x2="-9.4" y2="0.0" stroke="#1a1a1a" stroke-width="0.75" /><line x1="0.0" y1="3.0" x2="0.0" y2="9.4" stroke="#1a1a1a" stroke-width="0.75" /><line x1="0.0" y1="-3.0" x2="0.0" y2="-9.4" stroke="#1a1a1a" stroke-width="0.75" /><circle r="1.2" fill="#f0a030"/></g><line x1="179.0" y1="71.5" x2="190.5" y2="147.6" stroke="#2e2e2e" stroke-width="0.65" /><line x1="190.5" y1="147.6" x2="191.7" y2="155.6" stroke="#85859a" stroke-width="0.65" /><line x1="191.7" y1="155.6" x2="197.8" y2="196.6" stroke="#2e2e2e" stroke-width="0.65" /><line x1="197.8" y1="196.6" x2="202.5" y2="227.5" stroke="#85859a" stroke-width="0.65" /><line x1="202.5" y1="227.5" x2="203.2" y2="232.0" stroke="#2e2e2e" stroke-width="0.65" /><g transform="translate(177.9,65.6)" fill="none" stroke="#141414"><circle r="1.5" fill="#0a0a0a" stroke="none"/><circle r="4" stroke-width="0.85" stroke-dasharray="1.2 1.31"/><circle r="5.9" stroke-width="0.75" stroke-dasharray="1.4 1.69"/></g><g transform="translate(806.4,118.0)" fill="none" stroke="#141414"><circle r="1.5" fill="#0a0a0a" stroke="none"/><circle r="4" stroke-width="0.85" stroke-dasharray="1.2 1.31"/><circle r="5.9" stroke-width="0.75" stroke-dasharray="1.4 1.69"/></g><g transform="translate(806.6,330.3)" fill="none" stroke="#141414"><circle r="1.5" fill="#0a0a0a" stroke="none"/><circle r="4" stroke-width="0.85" stroke-dasharray="1.2 1.31"/><circle r="5.9" stroke-width="0.75" stroke-dasharray="1.4 1.69"/></g><g stroke="#141414" stroke-width="0.7" fill="none" stroke-linejoin="round"><polygon points="29.5,75.5 49.6,70.6 48.3,83.5 27.7,89.3"/><line x1="8.5" y1="66.4" x2="29.5" y2="75.5"/><line x1="8.5" y1="66.4" x2="49.6" y2="70.6"/><line x1="8.5" y1="66.4" x2="48.3" y2="83.5"/><line x1="8.5" y1="66.4" x2="27.7" y2="89.3"/><polygon points="41.1,63.0 33.5,73.7 46.9,70.1" fill="#0a0a0a"/></g><g stroke="#141414" stroke-width="0.7" fill="none" stroke-linejoin="round"><polygon points="855.3,224.4 858.5,227.5 847.8,238.2 844.4,235.7"/><line x1="862.5" y1="242.2" x2="855.3" y2="224.4"/><line x1="862.5" y1="242.2" x2="858.5" y2="227.5"/><line x1="862.5" y1="242.2" x2="847.8" y2="238.2"/><line x1="862.5" y1="242.2" x2="844.4" y2="235.7"/><polygon points="847.2,227.8 845.6,233.1 853.2,226.0" fill="#0a0a0a"/></g><g stroke="#141414" stroke-width="0.7" fill="none" stroke-linejoin="round"><polygon points="844.4,343.7 862.5,339.6 858.5,351.2 847.4,351.7"/><line x1="855.4" y1="343.7" x2="844.4" y2="343.7"/><line x1="855.4" y1="343.7" x2="862.5" y2="339.6"/><line x1="855.4" y1="343.7" x2="858.5" y2="351.2"/><line x1="855.4" y1="343.7" x2="847.4" y2="351.7"/><polygon points="847.4,337.1 844.9,342.7 852.9,342.2" fill="#0a0a0a"/></g><line x1="12.1" y1="302.1" x2="3.4" y2="305.7" stroke="#a01818" stroke-width="1.7" stroke-linecap="butt"/><text x="4.6" y="303.6" font-size="4.2" fill="#a01818" font-family="DejaVu Sans, sans-serif">x</text><line x1="12.1" y1="302.1" x2="19.3" y2="306.0" stroke="#189a18" stroke-width="1.7" stroke-linecap="butt"/><text x="20.6" y="305.0" font-size="4.2" fill="#189a18" font-family="DejaVu Sans, sans-serif">y</text><line x1="12.1" y1="302.1" x2="12.1" y2="291.8" stroke="#1c1c9c" stroke-width="1.7" stroke-linecap="butt"/><text x="13.0" y="291.5" font-size="4.2" fill="#1c1c9c" font-family="DejaVu Sans, sans-serif">z</text><line x1="604.5" y1="302.1" x2="616.4" y2="302.1" stroke="#a01818" stroke-width="1.7" stroke-linecap="butt"/><text x="617.4" y="300.4" font-size="4.2" fill="#a01818" font-family="DejaVu Sans, sans-serif">x</text><line x1="604.5" y1="302.1" x2="604.5" y2="290.9" stroke="#189a18" stroke-width="1.7" stroke-linecap="butt"/><text x="605.6" y="290.6" font-size="4.2" fill="#189a18" font-family="DejaVu Sans, sans-serif">y</text><line x1="12.2" y1="528.3" x2="24.0" y2="528.3" stroke="#189a18" stroke-width="1.7" stroke-linecap="butt"/><text x="24.8" y="527.0" font-size="4.2" fill="#189a18" font-family="DejaVu Sans, sans-serif">y</text><line x1="12.2" y1="528.3" x2="12.2" y2="516.5" stroke="#1c1c9c" stroke-width="1.7" stroke-linecap="butt"/><text x="13.2" y="515.8" font-size="4.2" fill="#1c1c9c" font-family="DejaVu Sans, sans-serif">z</text><line x1="604.6" y1="528.3" x2="616.4" y2="528.3" stroke="#a01818" stroke-width="1.7" stroke-linecap="butt"/><text x="617.4" y="527.0" font-size="4.2" fill="#a01818" font-family="DejaVu Sans, sans-serif">x</text><line x1="604.6" y1="528.3" x2="604.6" y2="516.5" stroke="#1c1c9c" stroke-width="1.7" stroke-linecap="butt"/><text x="605.6" y="515.8" font-size="4.2" fill="#1c1c9c" font-family="DejaVu Sans, sans-serif">z</text><rect x="-0.7" y="34.1" width="6.2" height="5.6" rx="1.4" fill="#2d2d2d"/><path d="M1.0 36.9h2.8M2.4 35.5v2.8" stroke="#929292" stroke-width="0.75"/><rect x="585.3" y="34.1" width="6.2" height="5.6" rx="1.4" fill="#2d2d2d"/><path d="M587.0 36.9h2.8M588.4 35.5v2.8" stroke="#929292" stroke-width="0.75"/><rect x="592.5" y="34.1" width="6.2" height="5.6" rx="1.4" fill="#2d2d2d"/><path d="M594.2 36.9h2.8M595.6 35.5v2.8" stroke="#929292" stroke-width="0.75"/><rect x="887.3" y="34.1" width="6.2" height="5.6" rx="1.4" fill="#2d2d2d"/><path d="M889.0 36.9h2.8M890.4 35.5v2.8" stroke="#929292" stroke-width="0.75"/><rect x="-0.4" y="325.7" width="6.2" height="5.6" rx="1.4" fill="#2d2d2d"/><path d="M1.3 328.5h2.8M2.7 327.1v2.8" stroke="#929292" stroke-width="0.75"/><rect x="585.4" y="325.7" width="6.2" height="5.6" rx="1.4" fill="#2d2d2d"/><path d="M587.1 328.5h2.8M588.5 327.1v2.8" stroke="#929292" stroke-width="0.75"/><rect x="592.5" y="325.7" width="6.2" height="5.6" rx="1.4" fill="#2d2d2d"/><path d="M594.2 328.5h2.8M595.6 327.1v2.8" stroke="#929292" stroke-width="0.75"/><rect x="887.4" y="325.6" width="6.2" height="5.6" rx="1.4" fill="#2d2d2d"/><path d="M889.1 328.4h2.8M890.5 327.0v2.8" stroke="#929292" stroke-width="0.75"/><rect x="575.4" y="308.6" width="6.2" height="5.6" rx="1.4" fill="#2d2d2d"/><path d="M577.1 311.4h2.8M578.5 310.0v2.8" stroke="#929292" stroke-width="0.75"/><rect x="877.4" y="308.6" width="6.2" height="5.6" rx="1.4" fill="#2d2d2d"/><path d="M879.1 311.4h2.8M880.5 310.0v2.8" stroke="#929292" stroke-width="0.75"/><rect x="575.4" y="534.0" width="6.2" height="5.6" rx="1.4" fill="#2d2d2d"/><path d="M577.1 536.8h2.8M578.5 535.4v2.8" stroke="#929292" stroke-width="0.75"/><rect x="877.4" y="534.0" width="6.2" height="5.6" rx="1.4" fill="#2d2d2d"/><path d="M879.1 536.8h2.8M880.5 535.4v2.8" stroke="#929292" stroke-width="0.75"/><polygon points="892.8,11.0 888.0,11.0 894.0,17.0" fill="#808080" opacity="0.45"/><line x1="892.5" y1="11.0" x2="894.0" y2="12.5" stroke="#a0a0a0" stroke-width="0.55" /><line x1="891.0" y1="11.0" x2="894.0" y2="14.0" stroke="#a0a0a0" stroke-width="0.55" /><line x1="889.5" y1="11.0" x2="894.0" y2="15.5" stroke="#a0a0a0" stroke-width="0.55" /><line x1="888.0" y1="11.0" x2="894.0" y2="17.0" stroke="#a0a0a0" stroke-width="0.55" /><polygon points="590.8,23.0 586.0,23.0 592.0,29.0" fill="#808080" opacity="0.45"/><line x1="590.5" y1="23.0" x2="592.0" y2="24.5" stroke="#a0a0a0" stroke-width="0.55" /><line x1="589.0" y1="23.0" x2="592.0" y2="26.0" stroke="#a0a0a0" stroke-width="0.55" /><line x1="587.5" y1="23.0" x2="592.0" y2="27.5" stroke="#a0a0a0" stroke-width="0.55" /><line x1="586.0" y1="23.0" x2="592.0" y2="29.0" stroke="#a0a0a0" stroke-width="0.55" /><polygon points="892.8,23.0 888.0,23.0 894.0,29.0" fill="#808080" opacity="0.45"/><line x1="892.5" y1="23.0" x2="894.0" y2="24.5" stroke="#a0a0a0" stroke-width="0.55" /><line x1="891.0" y1="23.0" x2="894.0" y2="26.0" stroke="#a0a0a0" stroke-width="0.55" /><line x1="889.5" y1="23.0" x2="894.0" y2="27.5" stroke="#a0a0a0" stroke-width="0.55" /><line x1="888.0" y1="23.0" x2="894.0" y2="29.0" stroke="#a0a0a0" stroke-width="0.55" /><polygon points="590.8,315.0 586.0,315.0 592.0,321.0" fill="#808080" opacity="0.45"/><line x1="590.5" y1="315.0" x2="592.0" y2="316.5" stroke="#a0a0a0" stroke-width="0.55" /><line x1="589.0" y1="315.0" x2="592.0" y2="318.0" stroke="#a0a0a0" stroke-width="0.55" /><line x1="587.5" y1="315.0" x2="592.0" y2="319.5" stroke="#a0a0a0" stroke-width="0.55" /><line x1="586.0" y1="315.0" x2="592.0" y2="321.0" stroke="#a0a0a0" stroke-width="0.55" /><polygon points="892.8,315.0 888.0,315.0 894.0,321.0" fill="#808080" opacity="0.45"/><line x1="892.5" y1="315.0" x2="894.0" y2="316.5" stroke="#a0a0a0" stroke-width="0.55" /><line x1="891.0" y1="315.0" x2="894.0" y2="318.0" stroke="#a0a0a0" stroke-width="0.55" /><line x1="889.5" y1="315.0" x2="894.0" y2="319.5" stroke="#a0a0a0" stroke-width="0.55" /><line x1="888.0" y1="315.0" x2="894.0" y2="321.0" stroke="#a0a0a0" stroke-width="0.55" /><polygon points="1.2,314.0 6.0,314.0 0.0,308.0" fill="#808080" opacity="0.45"/><line x1="1.5" y1="314.0" x2="0.0" y2="312.5" stroke="#a0a0a0" stroke-width="0.55" /><line x1="3.0" y1="314.0" x2="0.0" y2="311.0" stroke="#a0a0a0" stroke-width="0.55" /><line x1="4.5" y1="314.0" x2="0.0" y2="309.5" stroke="#a0a0a0" stroke-width="0.55" /><line x1="6.0" y1="314.0" x2="0.0" y2="308.0" stroke="#a0a0a0" stroke-width="0.55" /><polygon points="594.2,314.0 599.0,314.0 593.0,308.0" fill="#808080" opacity="0.45"/><line x1="594.5" y1="314.0" x2="593.0" y2="312.5" stroke="#a0a0a0" stroke-width="0.55" /><line x1="596.0" y1="314.0" x2="593.0" y2="311.0" stroke="#a0a0a0" stroke-width="0.55" /><line x1="597.5" y1="314.0" x2="593.0" y2="309.5" stroke="#a0a0a0" stroke-width="0.55" /><line x1="599.0" y1="314.0" x2="593.0" y2="308.0" stroke="#a0a0a0" stroke-width="0.55" /><polygon points="1.2,540.0 6.0,540.0 0.0,534.0" fill="#808080" opacity="0.45"/><line x1="1.5" y1="540.0" x2="0.0" y2="538.5" stroke="#a0a0a0" stroke-width="0.55" /><line x1="3.0" y1="540.0" x2="0.0" y2="537.0" stroke="#a0a0a0" stroke-width="0.55" /><line x1="4.5" y1="540.0" x2="0.0" y2="535.5" stroke="#a0a0a0" stroke-width="0.55" /><line x1="6.0" y1="540.0" x2="0.0" y2="534.0" stroke="#a0a0a0" stroke-width="0.55" /><polygon points="594.2,540.0 599.0,540.0 593.0,534.0" fill="#808080" opacity="0.45"/><line x1="594.5" y1="540.0" x2="593.0" y2="538.5" stroke="#a0a0a0" stroke-width="0.55" /><line x1="596.0" y1="540.0" x2="593.0" y2="537.0" stroke="#a0a0a0" stroke-width="0.55" /><line x1="597.5" y1="540.0" x2="593.0" y2="535.5" stroke="#a0a0a0" stroke-width="0.55" /><line x1="599.0" y1="540.0" x2="593.0" y2="534.0" stroke="#a0a0a0" stroke-width="0.55" /><polygon points="1.2,23.0 6.0,23.0 0.0,17.0" fill="#808080" opacity="0.45"/><line x1="1.5" y1="23.0" x2="0.0" y2="21.5" stroke="#a0a0a0" stroke-width="0.55" /><line x1="3.0" y1="23.0" x2="0.0" y2="20.0" stroke="#a0a0a0" stroke-width="0.55" /><line x1="4.5" y1="23.0" x2="0.0" y2="18.5" stroke="#a0a0a0" stroke-width="0.55" /><line x1="6.0" y1="23.0" x2="0.0" y2="17.0" stroke="#a0a0a0" stroke-width="0.55" /></svg>
</div></body></html>
